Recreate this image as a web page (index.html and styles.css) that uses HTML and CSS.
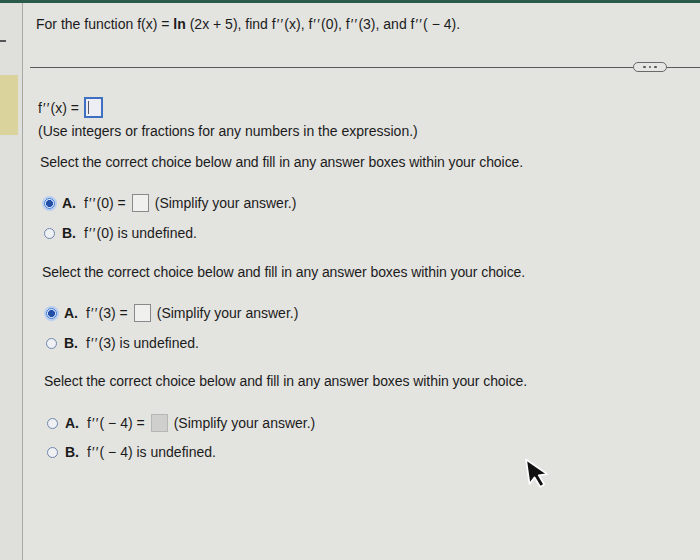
FILE: index.html
```html
<!DOCTYPE html>
<html>
<head>
<meta charset="utf-8">
<link rel="stylesheet" href="styles.css">
</head>
<body>
<div class="topbar"></div>
<div class="page">
  <div class="side">
    <div class="dash"></div>
    <div class="flag"></div>
  </div>
  <div class="main">
    <div class="title">For the function f(x) = <b>ln</b> (2x + 5), find f<span class="pr">′′</span>(x), f<span class="pr">′′</span>(0), f<span class="pr">′′</span>(3), and f<span class="pr">′′</span>( − 4).</div>
    <div class="rule">
      <div class="line"></div>
      <div class="pill"><span></span><span></span><span></span></div>
      <div class="line tail"></div>
    </div>
    <div class="answer">f<span class="pr">′′</span>(x) = <span class="box active"><span class="caret"></span></span></div>
    <div class="note">(Use integers or fractions for any numbers in the expression.)</div>

    <div class="group g1">
      <div class="prompt">Select the correct choice below and fill in any answer boxes within your choice.</div>
      <div class="opt first"><span class="radio on"></span><b class="lbl">A.</b><span class="expr">f<span class="pr">′′</span>(0) =</span><span class="box"></span><span class="hint">(Simplify your answer.)</span></div>
      <div class="opt"><span class="radio"></span><b class="lbl">B.</b><span class="expr">f<span class="pr">′′</span>(0) is undefined.</span></div>
    </div>

    <div class="group g2">
      <div class="prompt">Select the correct choice below and fill in any answer boxes within your choice.</div>
      <div class="opt first"><span class="radio on"></span><b class="lbl">A.</b><span class="expr">f<span class="pr">′′</span>(3) =</span><span class="box"></span><span class="hint">(Simplify your answer.)</span></div>
      <div class="opt"><span class="radio"></span><b class="lbl">B.</b><span class="expr">f<span class="pr">′′</span>(3) is undefined.</span></div>
    </div>

    <div class="group g3">
      <div class="prompt">Select the correct choice below and fill in any answer boxes within your choice.</div>
      <div class="opt first"><span class="radio"></span><b class="lbl">A.</b><span class="expr">f<span class="pr">′′</span>( − 4) =</span><span class="box off"></span><span class="hint">(Simplify your answer.)</span></div>
      <div class="opt"><span class="radio"></span><b class="lbl">B.</b><span class="expr">f<span class="pr">′′</span>( − 4) is undefined.</span></div>
    </div>
  </div>
</div>
<svg class="cursor" width="28" height="38" viewBox="0 0 26 34">
  <path d="M3 2 L3 25 L8.5 19.5 L12.5 29 L16.5 27.3 L12.6 18.2 L20.5 18.2 Z" fill="#111" stroke="#fff" stroke-width="1.6" stroke-linejoin="round"/>
</svg>
</body>
</html>
```

FILE: styles.css
```css
html, body {
  margin: 0;
  padding: 0;
}
body {
  width: 700px;
  height: 560px;
  overflow: hidden;
  background: #e3e3e0;
  font-family: "Liberation Sans", Arial, sans-serif;
  font-size: 14px;
  color: #1b1b1b;
  position: relative;
}
.topbar {
  height: 3px;
  background: #2b5a4b;
}
.page {
  display: flex;
  height: 557px;
}
.side {
  width: 22px;
  flex: none;
  background: #dfdfdc;
  border-right: 1px solid #a8a8a6;
  position: relative;
}
.dash {
  position: absolute;
  left: 0;
  top: 37px;
  width: 6px;
  height: 2px;
  background: #555;
}
.flag {
  position: absolute;
  left: 0;
  top: 72px;
  width: 18px;
  height: 60px;
  background: #dbd39c;
}
.main {
  flex: 1;
  padding: 12px 0 0 13px;
}
.pr {
  letter-spacing: 1.2px;
  margin-left: 1px;
}
.title {
  line-height: 18px;
}
.rule {
  display: flex;
  align-items: center;
  margin: 28px 0 0 -6px;
  height: 12px;
}
.line {
  flex: 1;
  height: 1px;
  background: #5a5a5a;
}
.line.tail {
  flex: none;
  width: 33px;
}
.pill {
  width: 32px;
  height: 8px;
  border: 1.5px solid #6a6a6a;
  border-radius: 6px;
  display: flex;
  justify-content: center;
  align-items: center;
  gap: 3px;
  background: #e6e6e4;
}
.pill span {
  width: 2.5px;
  height: 2.5px;
  border-radius: 50%;
  background: #555;
}
.answer {
  margin-top: 24px;
  margin-left: 2px;
  height: 21px;
  display: flex;
  align-items: center;
  white-space: pre;
}
.box {
  display: inline-block;
  width: 15px;
  height: 16px;
  border: 1px solid #8a8a8a;
  background: #f0f0ee;
  margin: 0 6px 0 6px;
  flex: none;
}
.box.active {
  width: 15px;
  height: 17px;
  border: 2px solid #3f6fc0;
  background: #eceef3;
  margin-left: 1px;
  position: relative;
}
.caret {
  position: absolute;
  left: 2px;
  top: 2px;
  width: 1.5px;
  height: 13px;
  background: #556;
}
.box.off {
  background: #cfcfcd;
  border-color: #b6b6b4;
}
.note {
  margin-top: 4px;
  margin-left: 2px;
  line-height: 18px;
}
.prompt {
  line-height: 18px;
  letter-spacing: -0.07px;
}
.g1 {
  margin-top: 13px;
  padding-left: 4px;
}
.g2 {
  margin-top: 21px;
  padding-left: 6px;
}
.g3 {
  margin-top: 20px;
  padding-left: 8px;
}
.opt {
  display: flex;
  align-items: center;
  height: 18px;
  margin-top: 12px;
  white-space: pre;
}
.opt.first {
  margin-top: 23px;
}
.g1 .opt {
  padding-left: 4px;
}
.g2 .opt {
  padding-left: 4px;
}
.g3 .opt {
  padding-left: 3px;
}
.g3 .opt.first {
  margin-top: 24px;
}
.g3 .opt + .opt {
  margin-top: 11px;
}
.radio {
  width: 9px;
  height: 9px;
  border: 1.5px solid #6f87ad;
  border-radius: 50%;
  background: #eef0f3;
  flex: none;
  box-sizing: content-box;
}
.radio.on {
  border: 1.5px solid #3d7ad8;
  background: radial-gradient(circle, #234fa8 0 3.2px, #dbe6f7 3.8px);
  box-shadow: 0 0 0 2px #b9cff0;
}
.lbl {
  margin-left: 7px;
  width: 22px;
  font-weight: bold;
}
.cursor {
  position: absolute;
  left: 525px;
  top: 455px;
  transform: rotate(-8deg);
}
```
